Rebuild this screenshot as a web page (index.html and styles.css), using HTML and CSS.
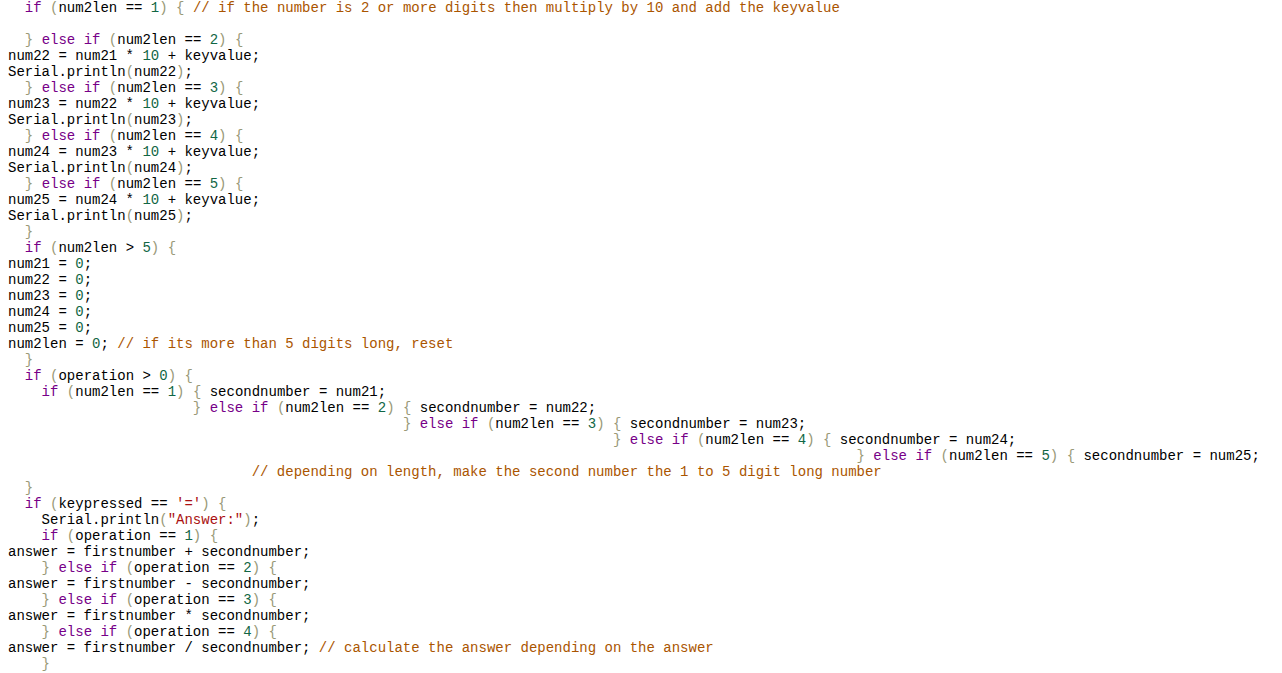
FILE: index.html
```html
<!DOCTYPE html>
<html>
<head>
<meta charset="utf-8">
<link rel="stylesheet" href="styles.css">
</head>
<body>
<pre class="code">  <span class="k">if</span> <span class="b">(</span>num2len == <span class="n">1</span><span class="b">)</span> <span class="b">{</span> <span class="c">// if the number is 2 or more digits then multiply by 10 and add the keyvalue</span>

  <span class="b">}</span> <span class="k">else</span> <span class="k">if</span> <span class="b">(</span>num2len == <span class="n">2</span><span class="b">)</span> <span class="b">{</span>
num22 = num21 * <span class="n">10</span> + keyvalue;
Serial.println<span class="b">(</span>num22<span class="b">)</span>;
  <span class="b">}</span> <span class="k">else</span> <span class="k">if</span> <span class="b">(</span>num2len == <span class="n">3</span><span class="b">)</span> <span class="b">{</span>
num23 = num22 * <span class="n">10</span> + keyvalue;
Serial.println<span class="b">(</span>num23<span class="b">)</span>;
  <span class="b">}</span> <span class="k">else</span> <span class="k">if</span> <span class="b">(</span>num2len == <span class="n">4</span><span class="b">)</span> <span class="b">{</span>
num24 = num23 * <span class="n">10</span> + keyvalue;
Serial.println<span class="b">(</span>num24<span class="b">)</span>;
  <span class="b">}</span> <span class="k">else</span> <span class="k">if</span> <span class="b">(</span>num2len == <span class="n">5</span><span class="b">)</span> <span class="b">{</span>
num25 = num24 * <span class="n">10</span> + keyvalue;
Serial.println<span class="b">(</span>num25<span class="b">)</span>;
  <span class="b">}</span>
  <span class="k">if</span> <span class="b">(</span>num2len &gt; <span class="n">5</span><span class="b">)</span> <span class="b">{</span>
num21 = <span class="n">0</span>;
num22 = <span class="n">0</span>;
num23 = <span class="n">0</span>;
num24 = <span class="n">0</span>;
num25 = <span class="n">0</span>;
num2len = <span class="n">0</span>; <span class="c">// if its more than 5 digits long, reset</span>
  <span class="b">}</span>
  <span class="k">if</span> <span class="b">(</span>operation &gt; <span class="n">0</span><span class="b">)</span> <span class="b">{</span>
    <span class="k">if</span> <span class="b">(</span>num2len == <span class="n">1</span><span class="b">)</span> <span class="b">{</span> secondnumber = num21;
                      <span class="b">}</span> <span class="k">else</span> <span class="k">if</span> <span class="b">(</span>num2len == <span class="n">2</span><span class="b">)</span> <span class="b">{</span> secondnumber = num22;
                                               <span class="b">}</span> <span class="k">else</span> <span class="k">if</span> <span class="b">(</span>num2len == <span class="n">3</span><span class="b">)</span> <span class="b">{</span> secondnumber = num23;
                                                                        <span class="b">}</span> <span class="k">else</span> <span class="k">if</span> <span class="b">(</span>num2len == <span class="n">4</span><span class="b">)</span> <span class="b">{</span> secondnumber = num24;
                                                                                                     <span class="b">}</span> <span class="k">else</span> <span class="k">if</span> <span class="b">(</span>num2len == <span class="n">5</span><span class="b">)</span> <span class="b">{</span> secondnumber = num25;
                             <span class="c">// depending on length, make the second number the 1 to 5 digit long number</span>
  <span class="b">}</span>
  <span class="k">if</span> <span class="b">(</span>keypressed == <span class="s">'='</span><span class="b">)</span> <span class="b">{</span>
    Serial.println<span class="b">(</span><span class="s">"Answer:"</span><span class="b">)</span>;
    <span class="k">if</span> <span class="b">(</span>operation == <span class="n">1</span><span class="b">)</span> <span class="b">{</span>
answer = firstnumber + secondnumber;
    <span class="b">}</span> <span class="k">else</span> <span class="k">if</span> <span class="b">(</span>operation == <span class="n">2</span><span class="b">)</span> <span class="b">{</span>
answer = firstnumber - secondnumber;
    <span class="b">}</span> <span class="k">else</span> <span class="k">if</span> <span class="b">(</span>operation == <span class="n">3</span><span class="b">)</span> <span class="b">{</span>
answer = firstnumber * secondnumber;
    <span class="b">}</span> <span class="k">else</span> <span class="k">if</span> <span class="b">(</span>operation == <span class="n">4</span><span class="b">)</span> <span class="b">{</span>
answer = firstnumber / secondnumber; <span class="c">// calculate the answer depending on the answer</span>
    <span class="b">}</span></pre>
</body>
</html>
```
FILE: styles.css
```css
html, body {
  background: #ffffff;
}
body {
  margin: 0 8px;
}
.code {
  margin: 0;
  padding: 0;
  font-family: "Liberation Mono", monospace;
  font-size: 14px;
  line-height: 16px;
  color: #000000;
  white-space: pre;
}
.k { color: #770088; }
.n { color: #116644; }
.s { color: #aa1111; }
.c { color: #aa5500; }
.b { color: #999977; }
```
